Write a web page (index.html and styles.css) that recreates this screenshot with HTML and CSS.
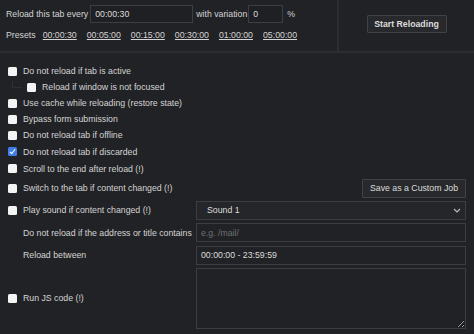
FILE: index.html
```html
<!DOCTYPE html>
<html>
<head>
<meta charset="utf-8">
<link rel="stylesheet" href="styles.css">
</head>
<body>
<div class="header">
  <div class="hleft">
    <div class="hrow">
      <span>Reload this tab every</span>
      <input class="tin period" type="text" value="00:00:30">
      <span>with variation</span>
      <input class="tin var" type="text" value="0">
      <span class="pct">%</span>
    </div>
    <div class="hrow presets">
      <span>Presets</span>
      <a href="#">00:00:30</a>
      <a href="#">00:05:00</a>
      <a href="#">00:15:00</a>
      <a href="#">00:30:00</a>
      <a href="#">01:00:00</a>
      <a href="#">05:00:00</a>
    </div>
  </div>
  <div class="hright">
    <button class="btn bold">Start Reloading</button>
  </div>
</div>
<div class="body">
  <label class="opt c1"><input type="checkbox"><span>Do not reload if tab is active</span></label>
  <label class="opt c1 sub"><span class="tree"></span><input type="checkbox"><span>Reload if window is not focused</span></label>
  <label class="opt c1"><input type="checkbox"><span>Use cache while reloading (restore state)</span></label>
  <label class="opt c1"><input type="checkbox"><span>Bypass form submission</span></label>
  <label class="opt c1"><input type="checkbox"><span>Do not reload tab if offline</span></label>
  <label class="opt c1"><input type="checkbox" checked><span>Do not reload tab if discarded</span></label>
  <label class="opt c1"><input type="checkbox"><span>Scroll to the end after reload (!)</span></label>
  <label class="opt"><input type="checkbox"><span>Switch to the tab if content changed (!)</span></label>
  <div class="ctl right"><button class="btn">Save as a Custom Job</button></div>
  <label class="opt"><input type="checkbox"><span>Play sound if content changed (!)</span></label>
  <div class="ctl"><div class="sel"><span>Sound 1</span><svg width="8" height="5" viewBox="0 0 8 5"><path d="M1 1 L4 4 L7 1" fill="none" stroke="#bbb" stroke-width="1.2"/></svg></div></div>
  <div class="opt plain"><span>Do not reload if the address or title contains</span></div>
  <div class="ctl"><input class="fin" type="text" placeholder="e.g. /mail/"></div>
  <div class="opt plain"><span>Reload between</span></div>
  <div class="ctl"><input class="fin" type="text" value="00:00:00 - 23:59:59"></div>
  <label class="opt"><input type="checkbox"><span>Run JS code (!)</span></label>
  <div class="ctl"><textarea class="code"></textarea></div>
</div>
</body>
</html>
```
FILE: styles.css
```css
html, body {
  margin: 0;
  padding: 0;
  background: #212225;
  color: #d4d4d4;
  font-family: "Liberation Sans", Arial, sans-serif;
  font-size: 8.75px;
  width: 474px;
  height: 334px;
  overflow: hidden;
}
.header {
  display: flex;
  height: 51px;
  border-bottom: 2px solid #2c2d31;
}
.hleft {
  width: 331px;
  padding: 5px 0 0 6px;
  border-right: 2px solid #2c2d31;
}
.hright {
  flex: 1;
  display: flex;
  align-items: center;
  justify-content: center;
  padding-bottom: 3px;
}
.hrow {
  display: flex;
  align-items: center;
  height: 18px;
}
.tin {
  box-sizing: border-box;
  height: 18px;
  background: #1f2023;
  border: 1px solid #3d3e42;
  color: #dcdcdc;
  font: inherit;
  padding: 0 4px;
  outline: none;
}
.period { width: 103px; margin: 0 3px 0 2px; }
.var { width: 35px; margin: 0 0 0 1px; }
.pct { margin-left: 4px; }
.presets {
  margin-top: 6px;
  height: 12px;
}
.presets a {
  color: #d4d4d4;
  text-decoration: underline;
  margin-left: 10px;
}
.presets a:first-of-type { margin-left: 7px; }
.btn {
  box-sizing: border-box;
  height: 19px;
  background: #28292c;
  border: 1px solid #414246;
  color: #dcdcdc;
  font: inherit;
  padding: 0 7px;
  border-radius: 1px;
}
.hright .btn { height: 18px; width: 80px; padding: 0; }
.bold { font-weight: bold; }
.body {
  display: grid;
  grid-template-columns: 188px 1fr;
  grid-template-rows: 16px 16px 16px 16px 16px 17px 17px 22px 22px 23px 22px 64px;
  padding: 10px 8px 0 8px;
}
.opt {
  grid-column: 1;
  display: flex;
  align-items: center;
  white-space: nowrap;
}
.c1 { grid-column: 1 / 3; }
.opt input[type=checkbox] {
  appearance: none;
  -webkit-appearance: none;
  margin: 0 6px 0 0;
  width: 9px;
  height: 9px;
  background: #f4f4f4;
  border-radius: 1.5px;
  position: relative;
  flex: none;
}
.opt input[type=checkbox]:checked {
  background: #3d7fe6;
}
.opt input[type=checkbox]:checked::after {
  content: "";
  position: absolute;
  left: 2.6px;
  top: 0.6px;
  width: 2.4px;
  height: 5px;
  border: solid #fff;
  border-width: 0 1.4px 1.4px 0;
  transform: rotate(40deg);
}
.plain { padding-left: 15px; }
.sub { padding-left: 4px; }
.tree {
  width: 9px;
  height: 6px;
  margin: -6px 5px 0 0;
  border-left: 1px solid #2e2f33;
  border-bottom: 1px solid #2e2f33;
  flex: none;
}
.ctl {
  grid-column: 2;
  display: flex;
  align-items: center;
}
.right { justify-content: flex-end; }
.sel {
  box-sizing: border-box;
  width: 100%;
  height: 19px;
  display: flex;
  align-items: center;
  justify-content: space-between;
  padding: 0 4px 0 10px;
  background: #25262a;
  border: 1px solid #3d3e42;
  color: #dcdcdc;
}
.fin {
  box-sizing: border-box;
  width: 100%;
  height: 19px;
  background: #212225;
  border: 1px solid #3d3e42;
  color: #dcdcdc;
  font: inherit;
  padding: 0 4px;
  outline: none;
}
.fin::placeholder { color: #6e6f73; font-style: normal; }
.code {
  box-sizing: border-box;
  width: 100%;
  height: 61px;
  background: #212225;
  border: 1px solid #3d3e42;
  color: #dcdcdc;
  font: inherit;
  margin: 0;
  padding: 4px;
  outline: none;
  color-scheme: dark;
}
```
